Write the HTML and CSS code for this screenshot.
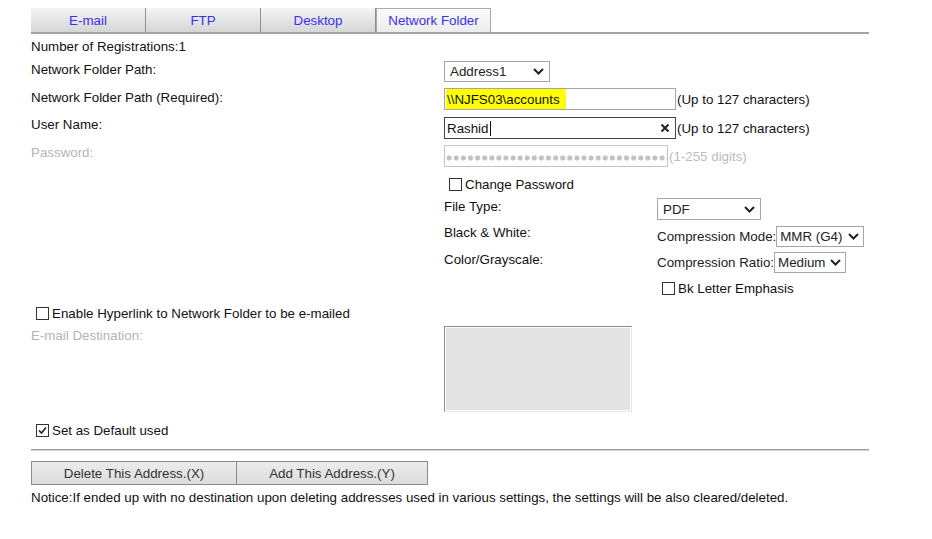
FILE: index.html
```html
<!DOCTYPE html>
<html>
<head>
<meta charset="utf-8">
<link rel="stylesheet" href="styles.css">
</head>
<body>
<div class="page">
  <div class="tabs">
    <div class="tab">E-mail</div>
    <div class="tab">FTP</div>
    <div class="tab">Desktop</div>
    <div class="tab active">Network Folder</div>
  </div>

  <div class="row h-reg"><div class="lbl">Number of Registrations:1</div></div>

  <div class="row h-path">
    <div class="lbl">Network Folder Path:</div>
    <div class="ctl">
      <div class="sel w-addr"><span>Address1</span><svg class="chev" width="11" height="7" viewBox="0 0 11 7"><path d="M1 1l4.5 4.5L10 1" fill="none" stroke="#222" stroke-width="2"/></svg></div>
    </div>
  </div>

  <div class="row h-req">
    <div class="lbl">Network Folder Path (Required):</div>
    <div class="ctl">
      <div class="inp w-path"><span class="hl">\\NJFS03\accounts</span></div><span class="note">(Up to 127 characters)</span>
    </div>
  </div>

  <div class="row h-user">
    <div class="lbl">User Name:</div>
    <div class="ctl">
      <div class="inp w-path focus"><span>Rashid</span><span class="caret"></span><svg class="clear" width="10" height="10" viewBox="0 0 10 10"><path d="M1.5 1.5l7 7M8.5 1.5l-7 7" stroke="#222" stroke-width="2"/></svg></div><span class="note">(Up to 127 characters)</span>
    </div>
  </div>

  <div class="row h-pw">
    <div class="lbl dis">Password:</div>
    <div class="ctl">
      <div class="inp w-pw disabled"><span class="dots"></span></div><span class="note dis">(1-255 digits)</span>
    </div>
  </div>

  <div class="row h-chg">
    <div></div>
    <div class="ctl cbrow"><span class="cb"></span><span>Change Password</span></div>
  </div>

  <div class="row h-ft">
    <div></div>
    <div class="sub">
      <div class="lbl">File Type:</div>
      <div class="ctl">
        <div class="sel w-pdf"><span>PDF</span><svg class="chev" width="11" height="7" viewBox="0 0 11 7"><path d="M1 1l4.5 4.5L10 1" fill="none" stroke="#222" stroke-width="2"/></svg></div>
      </div>
    </div>
  </div>

  <div class="row h-bw">
    <div></div>
    <div class="sub">
      <div class="lbl">Black &amp; White:</div>
      <div class="ctl mode">
        <span class="mlbl">Compression Mode:</span>
        <div class="sel w-mmr"><span>MMR (G4)</span><svg class="chev" width="11" height="7" viewBox="0 0 11 7"><path d="M1 1l4.5 4.5L10 1" fill="none" stroke="#222" stroke-width="2"/></svg></div>
      </div>
    </div>
  </div>

  <div class="row h-cg">
    <div></div>
    <div class="sub">
      <div class="lbl">Color/Grayscale:</div>
      <div class="ctl mode">
        <span class="mlbl">Compression Ratio:</span>
        <div class="sel w-med"><span>Medium</span><svg class="chev" width="11" height="7" viewBox="0 0 11 7"><path d="M1 1l4.5 4.5L10 1" fill="none" stroke="#222" stroke-width="2"/></svg></div>
      </div>
    </div>
  </div>

  <div class="row h-bk">
    <div></div>
    <div class="sub">
      <div></div>
      <div class="ctl cbrow"><span class="cb"></span><span>Bk Letter Emphasis</span></div>
    </div>
  </div>

  <div class="row h-en">
    <div class="ctl cbrow"><span class="cb"></span><span>Enable Hyperlink to Network Folder to be e-mailed</span></div>
  </div>

  <div class="row h-em">
    <div class="lbl dis">E-mail Destination:</div>
    <div class="ctl"><div class="ta"></div></div>
  </div>

  <div class="row h-def">
    <div class="ctl cbrow"><span class="cb checked"><svg width="11" height="11" viewBox="0 0 11 11"><path d="M2 5.5l2.5 2.5L9 2.5" fill="none" stroke="#222" stroke-width="1.6"/></svg></span><span>Set as Default used</span></div>
  </div>

  <div class="rule"></div>

  <div class="btns">
    <div class="btn w-del">Delete This Address.(X)</div>
    <div class="btn w-add">Add This Address.(Y)</div>
  </div>

  <div class="notice">Notice:If ended up with no destination upon deleting addresses used in various settings, the settings will be also cleared/deleted.</div>
</div>
</body>
</html>
```

FILE: styles.css
```css
html, body {
  margin: 0;
  padding: 0;
  background: #fff;
}

body {
  font-family: "Liberation Sans", Arial, sans-serif;
  font-size: 13.33px;
  color: #111;
}

.page {
  width: 838px;
  padding-left: 31px;
}

/* tabs */
.tabs {
  margin-top: 8px;
  height: 24px;
  display: flex;
  border-bottom: 2px solid #a4a4a4;
}

.tab {
  width: 114px;
  height: 24px;
  line-height: 25px;
  text-align: center;
  color: #3a2ff0;
  background: linear-gradient(#f4f4f4, #d6d6d6);
  border-right: 1px solid #8f8f8f;
  box-sizing: content-box;
}

.tab.active {
  width: 113px;
  background: linear-gradient(#fbfbfb, #ececec);
  border: 1px solid #a8a8a8;
  border-bottom: none;
  height: 23px;
  line-height: 24px;
}

/* rows */
.row {
  display: grid;
  grid-template-columns: 413px auto;
  align-items: start;
}

.lbl {
  line-height: 15px;
  padding-top: 4px;
  white-space: nowrap;
}

.dis {
  color: #b4b4b4;
}

.ctl {
  display: flex;
  align-items: center;
  white-space: nowrap;
}

.h-reg { height: 24px; }
.h-reg .lbl { padding-top: 1px; line-height: 24px; }

.h-path { height: 28px; }
.h-path .lbl { padding-top: 4px; }
.h-path .sel { margin-top: 3px; }

.h-req { height: 28px; }
.h-req .ctl { margin-top: 2px; }

.h-user { height: 28px; }
.h-user .ctl { margin-top: 3px; }
.h-user .lbl { padding-top: 3px; }

.h-pw { height: 28px; }
.h-pw .ctl { margin-top: 3px; }
.h-pw .lbl { padding-top: 3px; }

.h-chg { height: 26px; }
.h-chg .ctl { margin-top: 7px; }

.sub {
  display: grid;
  grid-template-columns: 213px auto;
  align-items: start;
}

.h-ft { height: 26px; }
.h-ft .lbl { padding-top: 3px; }
.h-ft .sel { margin-top: 2px; }

.h-bw { height: 27px; }
.h-bw .lbl { padding-top: 3px; }
.h-bw .mode { margin-top: 4px; }

.h-cg { height: 26px; }
.h-cg .lbl { padding-top: 3px; }
.h-cg .mode { margin-top: 3px; }

.h-bk { height: 25px; }
.h-bk .ctl { margin-top: 6px; }

.h-en { height: 26px; }
.h-en .ctl { margin-top: 6px; }

.h-em { height: 88px; }
.h-em .lbl { padding-top: 2px; }

.h-def { height: 32px; }
.h-def .ctl { margin-top: 9px; }

/* select look-alike */
.sel {
  box-sizing: border-box;
  height: 21px;
  border: 1px solid #a6a6a6;
  background: #fff;
  display: flex;
  align-items: center;
  justify-content: space-between;
  padding: 0 5px 0 5px;
  color: #222;
}

.chev { flex: none; }

.w-addr { width: 106px; }
.w-pdf { width: 104px; height: 22px; }
.w-mmr { width: 88px; padding-left: 3px; padding-right: 4px; }
.w-med { width: 72px; padding-left: 3px; padding-right: 4px; }

.mlbl { color: #222; }

/* inputs */
.inp {
  box-sizing: border-box;
  height: 22px;
  border: 1px solid #a6a6a6;
  background: #fff;
  display: flex;
  align-items: center;
  padding-left: 2px;
  color: #111;
}

.w-path { width: 232px; }
.w-pw { width: 224px; }

.hl {
  background: #ffff00;
  align-self: stretch;
  display: flex;
  align-items: center;
  width: 119px;
  margin-left: -1px;
  padding-left: 1px;
}

.inp.focus {
  border-color: #444;
  padding-left: 2px;
}

.caret {
  width: 1px;
  height: 15px;
  background: #111;
  margin-left: 1px;
}

.clear {
  margin-left: auto;
  margin-right: 5px;
}

.inp.disabled {
  border-color: #c4c4c4;
  overflow: hidden;
  padding-left: 0;
}

.dots {
  flex: 1;
  height: 8px;
  margin-top: 3px;
  margin-left: 1px;
  background-image: radial-gradient(circle at 3.2px 4px, #c2c2c2 2.3px, rgba(194,194,194,0) 2.9px);
  background-size: 7.1px 8px;
  background-repeat: repeat-x;
}

.note {
  padding-left: 1px;
  color: #111;
}

.note.dis {
  color: #bcbcbc;
}

/* checkbox */
.cbrow span:last-child { line-height: 15px; }

.cb {
  box-sizing: border-box;
  width: 13px;
  height: 13px;
  border: 1px solid #333;
  background: #fff;
  margin-left: 5px;
  margin-right: 3px;
  display: flex;
  align-items: center;
  justify-content: center;
  flex: none;
}

/* textarea */
.ta {
  box-sizing: border-box;
  width: 188px;
  height: 86px;
  border-top: 1px solid #8a8a8a;
  border-left: 1px solid #8a8a8a;
  border-right: 1px solid #e6e6e6;
  border-bottom: 1px solid #e6e6e6;
  padding: 1px;
  background: #fff;
  display: flex;
}

.ta::before {
  content: "";
  flex: 1;
  background: #e3e3e3;
}

/* bottom */
.rule {
  margin-top: 3px;
  height: 0;
  border-top: 1px solid #9c9c9c;
  border-bottom: 1px solid #d2d2d2;
}

.btns {
  margin-top: 10px;
  display: flex;
}

.btn {
  box-sizing: border-box;
  height: 24px;
  line-height: 23px;
  text-align: center;
  border: 1px solid #8a8a8a;
  background: linear-gradient(#ececec, #dcdcdc);
  color: #333;
}

.w-del { width: 206px; }
.w-add { width: 191px; border-left: none; }

.notice {
  margin-top: 5px;
  line-height: 15px;
  white-space: nowrap;
}
```
